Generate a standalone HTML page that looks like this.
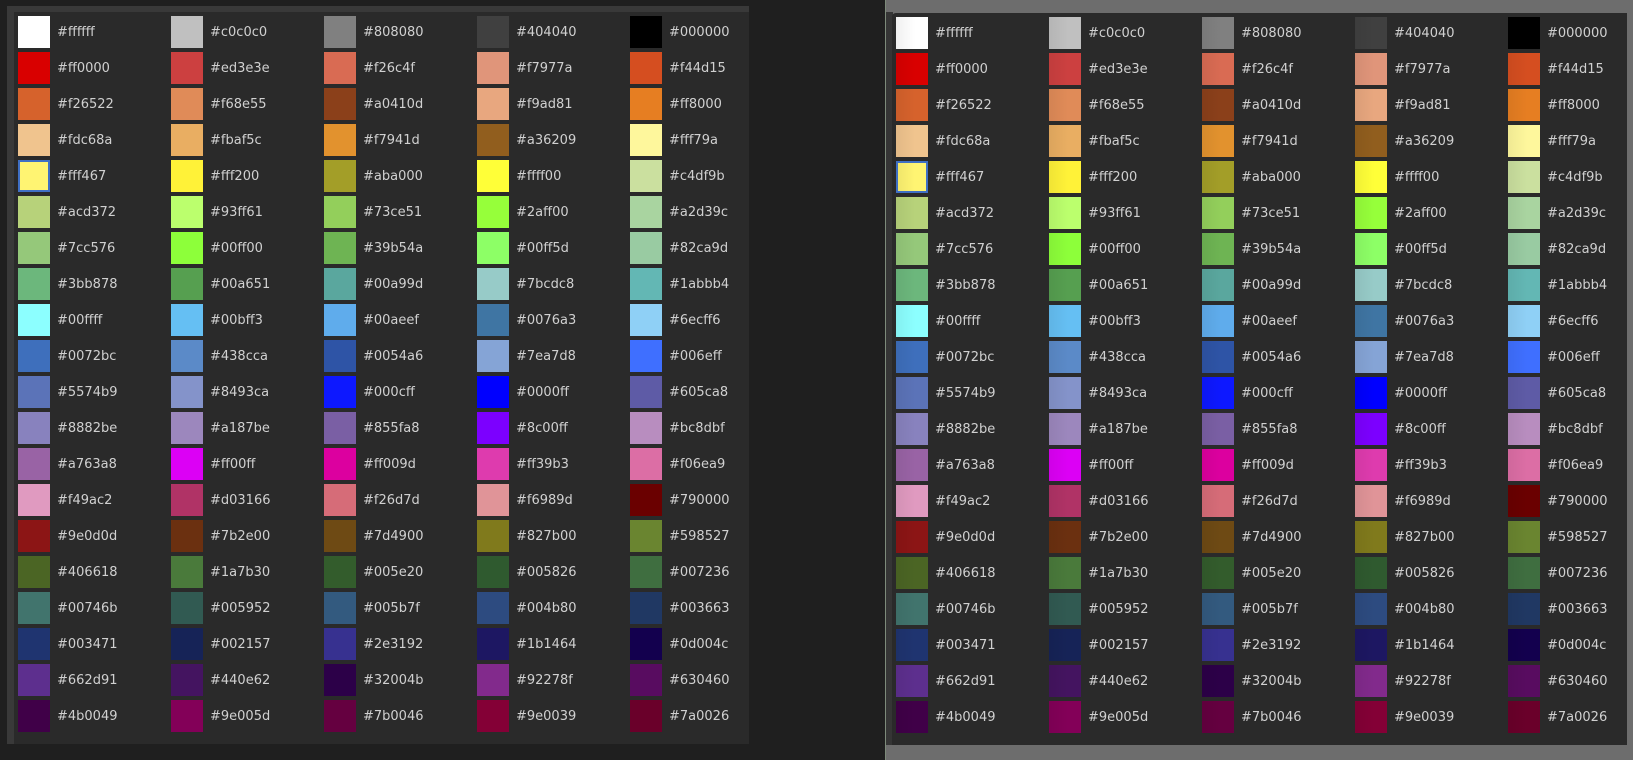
<!DOCTYPE html>
<html><head><meta charset="utf-8"><style>
html,body{margin:0;padding:0;}
body{width:1633px;height:760px;background:#1f1f1f;position:relative;overflow:hidden;font-family:"DejaVu Sans","Liberation Sans",sans-serif;}
.lo{position:absolute;left:7px;top:6px;width:742px;height:738px;background:#393939;}
.li{position:absolute;left:14px;top:12px;width:735px;height:732px;background:#2a2a2a;}
.ro{position:absolute;left:885px;top:0;width:748px;height:760px;background:#6d6d6d;border-left:1px solid #7d8a7a;}
.rs{position:absolute;left:886px;top:12px;width:7px;height:733px;background:#353535;}
.ri{position:absolute;left:892px;top:13px;width:735px;height:732px;background:#2a2a2a;border-radius:4px 0 0 0;}
.g{position:absolute;display:grid;grid-template-columns:repeat(5,153px);grid-auto-rows:36px;}
.g div{display:flex;align-items:center;height:32px;font-size:13px;color:#d0d0d0;white-space:nowrap;}
.g i{display:block;width:32px;height:32px;margin-right:7px;flex:none;box-sizing:border-box;}
.g i.sel{border:2px solid #3f6fc4;}
#gr i{background-image:linear-gradient(90deg,rgba(0,0,0,.06),rgba(0,0,0,0) 60%);}
</style></head><body>
<div class="lo"></div><div class="li"></div>
<div class="ro"></div><div class="rs"></div><div class="ri"></div>
<div class="g" id="gl" style="left:18px;top:16px;">
<div><i style="background-color:#ffffff"></i>#ffffff</div><div><i style="background-color:#c0c0c0"></i>#c0c0c0</div><div><i style="background-color:#808080"></i>#808080</div><div><i style="background-color:#404040"></i>#404040</div><div><i style="background-color:#000000"></i>#000000</div>
<div><i style="background-color:#d90000"></i>#ff0000</div><div><i style="background-color:#cc4040"></i>#ed3e3e</div><div><i style="background-color:#d96b53"></i>#f26c4f</div><div><i style="background-color:#e0957a"></i>#f7977a</div><div><i style="background-color:#d54e20"></i>#f44d15</div>
<div><i style="background-color:#d6622c"></i>#f26522</div><div><i style="background-color:#e08b58"></i>#f68e55</div><div><i style="background-color:#8b401a"></i>#a0410d</div><div><i style="background-color:#e8a77f"></i>#f9ad81</div><div><i style="background-color:#e67e22"></i>#ff8000</div>
<div><i style="background-color:#f0c48e"></i>#fdc68a</div><div><i style="background-color:#e9ae62"></i>#fbaf5c</div><div><i style="background-color:#e2922e"></i>#f7941d</div><div><i style="background-color:#915e1e"></i>#a36209</div><div><i style="background-color:#fef79c"></i>#fff79a</div>
<div><i class="sel" style="background-color:#fff472"></i>#fff467</div><div><i style="background-color:#fff238"></i>#fff200</div><div><i style="background-color:#a39e28"></i>#aba000</div><div><i style="background-color:#ffff38"></i>#ffff00</div><div><i style="background-color:#cbe09f"></i>#c4df9b</div>
<div><i style="background-color:#b7d27a"></i>#acd372</div><div><i style="background-color:#bbff6d"></i>#93ff61</div><div><i style="background-color:#93cf5b"></i>#73ce51</div><div><i style="background-color:#96ff3a"></i>#2aff00</div><div><i style="background-color:#a9d4a0"></i>#a2d39c</div>
<div><i style="background-color:#95c87a"></i>#7cc576</div><div><i style="background-color:#8dff3a"></i>#00ff00</div><div><i style="background-color:#6eb453"></i>#39b54a</div><div><i style="background-color:#8dff66"></i>#00ff5d</div><div><i style="background-color:#99cba2"></i>#82ca9d</div>
<div><i style="background-color:#6cb77c"></i>#3bb878</div><div><i style="background-color:#569f50"></i>#00a651</div><div><i style="background-color:#5aa79e"></i>#00a99d</div><div><i style="background-color:#97cbc8"></i>#7bcdc8</div><div><i style="background-color:#63b7b4"></i>#1abbb4</div>
<div><i style="background-color:#8cffff"></i>#00ffff</div><div><i style="background-color:#65bff3"></i>#00bff3</div><div><i style="background-color:#5facec"></i>#00aeef</div><div><i style="background-color:#3f75a3"></i>#0076a3</div><div><i style="background-color:#8fd0f6"></i>#6ecff6</div>
<div><i style="background-color:#3e6fbc"></i>#0072bc</div><div><i style="background-color:#5b8ac8"></i>#438cca</div><div><i style="background-color:#2e54a6"></i>#0054a6</div><div><i style="background-color:#85a4d6"></i>#7ea7d8</div><div><i style="background-color:#3f6fff"></i>#006eff</div>
<div><i style="background-color:#5b73b8"></i>#5574b9</div><div><i style="background-color:#8493ca"></i>#8493ca</div><div><i style="background-color:#0d18ff"></i>#000cff</div><div><i style="background-color:#0000ff"></i>#0000ff</div><div><i style="background-color:#5e5ba6"></i>#605ca8</div>
<div><i style="background-color:#8882be"></i>#8882be</div><div><i style="background-color:#9c87bd"></i>#a187be</div><div><i style="background-color:#7a5fa4"></i>#855fa8</div><div><i style="background-color:#7c00ff"></i>#8c00ff</div><div><i style="background-color:#b88dbf"></i>#bc8dbf</div>
<div><i style="background-color:#9963a5"></i>#a763a8</div><div><i style="background-color:#dc00f5"></i>#ff00ff</div><div><i style="background-color:#dc009f"></i>#ff009d</div><div><i style="background-color:#de3bae"></i>#ff39b3</div><div><i style="background-color:#dc6ea5"></i>#f06ea9</div>
<div><i style="background-color:#e09ac0"></i>#f49ac2</div><div><i style="background-color:#b03366"></i>#d03166</div><div><i style="background-color:#d66c78"></i>#f26d7d</div><div><i style="background-color:#e09498"></i>#f6989d</div><div><i style="background-color:#6a0000"></i>#790000</div>
<div><i style="background-color:#8c1515"></i>#9e0d0d</div><div><i style="background-color:#6b3010"></i>#7b2e00</div><div><i style="background-color:#6e4a14"></i>#7d4900</div><div><i style="background-color:#807a1c"></i>#827b00</div><div><i style="background-color:#6a8530"></i>#598527</div>
<div><i style="background-color:#4b6524"></i>#406618</div><div><i style="background-color:#4a7a3b"></i>#1a7b30</div><div><i style="background-color:#335c2c"></i>#005e20</div><div><i style="background-color:#2f5a2f"></i>#005826</div><div><i style="background-color:#3f6e40"></i>#007236</div>
<div><i style="background-color:#41746d"></i>#00746b</div><div><i style="background-color:#315a52"></i>#005952</div><div><i style="background-color:#335a7f"></i>#005b7f</div><div><i style="background-color:#2d4b80"></i>#004b80</div><div><i style="background-color:#203863"></i>#003663</div>
<div><i style="background-color:#1f3470"></i>#003471</div><div><i style="background-color:#162357"></i>#002157</div><div><i style="background-color:#373190"></i>#2e3192</div><div><i style="background-color:#1d1762"></i>#1b1464</div><div><i style="background-color:#13004e"></i>#0d004c</div>
<div><i style="background-color:#5d2f8e"></i>#662d91</div><div><i style="background-color:#441460"></i>#440e62</div><div><i style="background-color:#2c0048"></i>#32004b</div><div><i style="background-color:#822a8c"></i>#92278f</div><div><i style="background-color:#580c60"></i>#630460</div>
<div><i style="background-color:#400048"></i>#4b0049</div><div><i style="background-color:#830058"></i>#9e005d</div><div><i style="background-color:#650040"></i>#7b0046</div><div><i style="background-color:#840036"></i>#9e0039</div><div><i style="background-color:#6a002a"></i>#7a0026</div>
</div>
<div class="g" id="gr" style="left:896px;top:17px;">
<div><i style="background-color:#ffffff"></i>#ffffff</div><div><i style="background-color:#c0c0c0"></i>#c0c0c0</div><div><i style="background-color:#808080"></i>#808080</div><div><i style="background-color:#404040"></i>#404040</div><div><i style="background-color:#000000"></i>#000000</div>
<div><i style="background-color:#d90000"></i>#ff0000</div><div><i style="background-color:#cc4040"></i>#ed3e3e</div><div><i style="background-color:#d96b53"></i>#f26c4f</div><div><i style="background-color:#e0957a"></i>#f7977a</div><div><i style="background-color:#d54e20"></i>#f44d15</div>
<div><i style="background-color:#d6622c"></i>#f26522</div><div><i style="background-color:#e08b58"></i>#f68e55</div><div><i style="background-color:#8b401a"></i>#a0410d</div><div><i style="background-color:#e8a77f"></i>#f9ad81</div><div><i style="background-color:#e67e22"></i>#ff8000</div>
<div><i style="background-color:#f0c48e"></i>#fdc68a</div><div><i style="background-color:#e9ae62"></i>#fbaf5c</div><div><i style="background-color:#e2922e"></i>#f7941d</div><div><i style="background-color:#915e1e"></i>#a36209</div><div><i style="background-color:#fef79c"></i>#fff79a</div>
<div><i class="sel" style="background-color:#fff472"></i>#fff467</div><div><i style="background-color:#fff238"></i>#fff200</div><div><i style="background-color:#a39e28"></i>#aba000</div><div><i style="background-color:#ffff38"></i>#ffff00</div><div><i style="background-color:#cbe09f"></i>#c4df9b</div>
<div><i style="background-color:#b7d27a"></i>#acd372</div><div><i style="background-color:#bbff6d"></i>#93ff61</div><div><i style="background-color:#93cf5b"></i>#73ce51</div><div><i style="background-color:#96ff3a"></i>#2aff00</div><div><i style="background-color:#a9d4a0"></i>#a2d39c</div>
<div><i style="background-color:#95c87a"></i>#7cc576</div><div><i style="background-color:#8dff3a"></i>#00ff00</div><div><i style="background-color:#6eb453"></i>#39b54a</div><div><i style="background-color:#8dff66"></i>#00ff5d</div><div><i style="background-color:#99cba2"></i>#82ca9d</div>
<div><i style="background-color:#6cb77c"></i>#3bb878</div><div><i style="background-color:#569f50"></i>#00a651</div><div><i style="background-color:#5aa79e"></i>#00a99d</div><div><i style="background-color:#97cbc8"></i>#7bcdc8</div><div><i style="background-color:#63b7b4"></i>#1abbb4</div>
<div><i style="background-color:#8cffff"></i>#00ffff</div><div><i style="background-color:#65bff3"></i>#00bff3</div><div><i style="background-color:#5facec"></i>#00aeef</div><div><i style="background-color:#3f75a3"></i>#0076a3</div><div><i style="background-color:#8fd0f6"></i>#6ecff6</div>
<div><i style="background-color:#3e6fbc"></i>#0072bc</div><div><i style="background-color:#5b8ac8"></i>#438cca</div><div><i style="background-color:#2e54a6"></i>#0054a6</div><div><i style="background-color:#85a4d6"></i>#7ea7d8</div><div><i style="background-color:#3f6fff"></i>#006eff</div>
<div><i style="background-color:#5b73b8"></i>#5574b9</div><div><i style="background-color:#8493ca"></i>#8493ca</div><div><i style="background-color:#0d18ff"></i>#000cff</div><div><i style="background-color:#0000ff"></i>#0000ff</div><div><i style="background-color:#5e5ba6"></i>#605ca8</div>
<div><i style="background-color:#8882be"></i>#8882be</div><div><i style="background-color:#9c87bd"></i>#a187be</div><div><i style="background-color:#7a5fa4"></i>#855fa8</div><div><i style="background-color:#7c00ff"></i>#8c00ff</div><div><i style="background-color:#b88dbf"></i>#bc8dbf</div>
<div><i style="background-color:#9963a5"></i>#a763a8</div><div><i style="background-color:#dc00f5"></i>#ff00ff</div><div><i style="background-color:#dc009f"></i>#ff009d</div><div><i style="background-color:#de3bae"></i>#ff39b3</div><div><i style="background-color:#dc6ea5"></i>#f06ea9</div>
<div><i style="background-color:#e09ac0"></i>#f49ac2</div><div><i style="background-color:#b03366"></i>#d03166</div><div><i style="background-color:#d66c78"></i>#f26d7d</div><div><i style="background-color:#e09498"></i>#f6989d</div><div><i style="background-color:#6a0000"></i>#790000</div>
<div><i style="background-color:#8c1515"></i>#9e0d0d</div><div><i style="background-color:#6b3010"></i>#7b2e00</div><div><i style="background-color:#6e4a14"></i>#7d4900</div><div><i style="background-color:#807a1c"></i>#827b00</div><div><i style="background-color:#6a8530"></i>#598527</div>
<div><i style="background-color:#4b6524"></i>#406618</div><div><i style="background-color:#4a7a3b"></i>#1a7b30</div><div><i style="background-color:#335c2c"></i>#005e20</div><div><i style="background-color:#2f5a2f"></i>#005826</div><div><i style="background-color:#3f6e40"></i>#007236</div>
<div><i style="background-color:#41746d"></i>#00746b</div><div><i style="background-color:#315a52"></i>#005952</div><div><i style="background-color:#335a7f"></i>#005b7f</div><div><i style="background-color:#2d4b80"></i>#004b80</div><div><i style="background-color:#203863"></i>#003663</div>
<div><i style="background-color:#1f3470"></i>#003471</div><div><i style="background-color:#162357"></i>#002157</div><div><i style="background-color:#373190"></i>#2e3192</div><div><i style="background-color:#1d1762"></i>#1b1464</div><div><i style="background-color:#13004e"></i>#0d004c</div>
<div><i style="background-color:#5d2f8e"></i>#662d91</div><div><i style="background-color:#441460"></i>#440e62</div><div><i style="background-color:#2c0048"></i>#32004b</div><div><i style="background-color:#822a8c"></i>#92278f</div><div><i style="background-color:#580c60"></i>#630460</div>
<div><i style="background-color:#400048"></i>#4b0049</div><div><i style="background-color:#830058"></i>#9e005d</div><div><i style="background-color:#650040"></i>#7b0046</div><div><i style="background-color:#840036"></i>#9e0039</div><div><i style="background-color:#6a002a"></i>#7a0026</div>
</div>
</body></html>
